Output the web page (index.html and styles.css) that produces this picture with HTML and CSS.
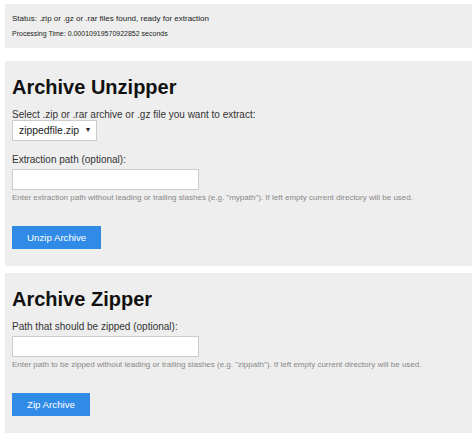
FILE: index.html
```html
<!DOCTYPE html>
<html lang="en">
<head>
    <meta charset="UTF-8">
    <meta name="viewport" content="width=device-width, initial-scale=1.0">
    <title>Archive Unzipper</title>
    <link rel="stylesheet" href="styles.css">
</head>
<body>

    <!-- Status of the last scan -->
    <div class="status">
        <p class="status-line">Status: .zip or .gz or .rar files found, ready for extraction</p>
        <p class="status-time">Processing Time: 0.00010919570922852 seconds</p>
    </div>

    <!-- Unzip section -->
    <div class="card">
        <h1>Archive Unzipper</h1>
        <form id="unzip-form">
            <label for="zipfile">Select .zip or .rar archive or .gz file you want to extract:</label>
            <div class="select-wrap">
                <select id="zipfile" name="zipfile">
                    <option>zippedfile.zip</option>
                </select>
            </div>

            <label for="extpath" class="spaced">Extraction path (optional):</label>
            <input type="text" id="extpath" name="extpath">
            <span class="hint">Enter extraction path without leading or trailing slashes (e.g. "mypath"). If left empty current directory will be used.</span>

            <button type="button">Unzip Archive</button>
        </form>
    </div>

    <!-- Zip section -->
    <div class="card">
        <h1>Archive Zipper</h1>
        <form id="zip-form">
            <label for="zippath">Path that should be zipped (optional):</label>
            <input type="text" id="zippath" name="zippath">
            <span class="hint">Enter path to be zipped without leading or trailing slashes (e.g. "zippath"). If left empty current directory will be used.</span>

            <button type="button">Zip Archive</button>
        </form>
    </div>

</body>
</html>
```

FILE: styles.css
```css
html, body {
    margin: 0;
    font-family: "Liberation Sans", Arial, sans-serif;
    color: #222;
    background-color: #fff;
}

body {
    padding: 4px 2px 0 5px;
    display: flex;
    flex-direction: column;
    gap: 13px;
}

/* Grey status box at the top */
.status {
    background-color: #eeeeee;
    padding: 9px 7px 9px 7px;
}

.status p {
    margin: 0;
}

.status-line {
    font-size: 8px;
    line-height: 12px;
}

.status-time {
    font-size: 7px;
    line-height: 10px;
    margin-top: 4px !important;
}

/* Grey sections */
.card {
    background-color: #eeeeee;
    padding: 14px 7px 17px 7px;
}

.card + .card {
    margin-top: -6px;
}

h1 {
    margin: 0 0 9px 0;
    font-size: 20px;
    line-height: 24px;
    color: #111;
}

form {
    display: flex;
    flex-direction: column;
    align-items: flex-start;
}

label {
    font-size: 10px;
    line-height: 13px;
    margin-bottom: 3px;
    color: #333;
}

label.spaced {
    margin-top: 12px;
}

/* Dropdown with a small arrow drawn on the right */
.select-wrap {
    position: relative;
    margin-top: -4px;
}

.select-wrap::after {
    content: "▾";
    position: absolute;
    right: 7px;
    top: 5px;
    font-size: 8px;
    color: #222;
    pointer-events: none;
}

select {
    appearance: none;
    -webkit-appearance: none;
    font-family: inherit;
    font-size: 10.4px;
    height: 21px;
    width: 85px;
    padding: 0 6px;
    background-color: #fff;
    border: 1px solid #ccc;
    border-radius: 0;
    color: #222;
}

input[type="text"] {
    width: 187px;
    height: 21px;
    box-sizing: border-box;
    border: 1px solid #ccc;
    background-color: #fff;
    margin: 0;
}

.hint {
    font-size: 8px;
    line-height: 10px;
    color: #888;
    margin-top: 3px;
}

/* Blue submit buttons */
button {
    margin-top: 23px;
    height: 23px;
    padding: 0 15px;
    background-color: #2f8be6;
    color: #fff;
    border: none;
    font-family: inherit;
    font-size: 9.7px;
    cursor: pointer;
}

button:hover {
    background-color: #1f78d1;
}
```
